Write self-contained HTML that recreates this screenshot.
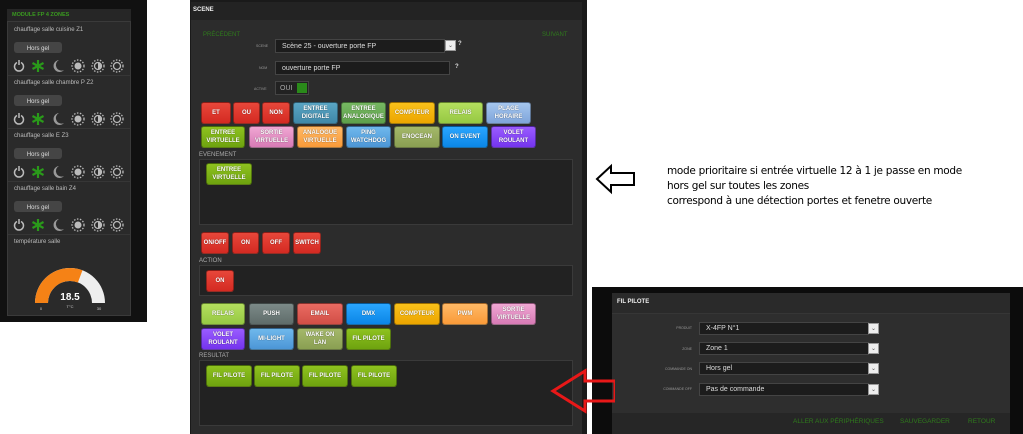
<!DOCTYPE html>
<html><head><meta charset="utf-8"><style>
*{margin:0;padding:0;box-sizing:border-box}
body{width:1023px;height:434px;background:#fff;position:relative;overflow:hidden;font-family:"Liberation Sans",Arial,sans-serif}
.a{position:absolute}
.t{font-size:6px;color:#bbb}
.b{position:absolute;height:22px;border-radius:3px;color:#fff;font-size:6px;font-weight:bold;display:flex;align-items:center;justify-content:center;text-align:center;line-height:8px;text-shadow:0 0 1px rgba(0,0,0,.6);border:1px solid rgba(0,0,0,.35)}
.red{background:linear-gradient(#e8473a,#d42a22)}
.tl{background:linear-gradient(#5aa5c4,#3f88a8)}
.gr{background:linear-gradient(#76b862,#5ea04b)}
.yl{background:linear-gradient(#f9c11a,#eca500)}
.lg{background:linear-gradient(#b4df5e,#96c843)}
.lb{background:linear-gradient(#a5c6ef,#7fa5da)}
.vg{background:linear-gradient(#8ec21f,#6ea30f)}
.pk{background:linear-gradient(#f0a7d3,#d77ab5)}
.or{background:linear-gradient(#ffb966,#f99a38)}
.bl{background:linear-gradient(#6fb8ec,#4c96d6)}
.ol{background:linear-gradient(#a4b86a,#8a9f52)}
.cy{background:linear-gradient(#2aa6ff,#0b86e6)}
.pu{background:linear-gradient(#9a5cff,#7434ee)}
.gy{background:linear-gradient(#7c8a88,#5f6c6a)}
.em{background:linear-gradient(#ea6b62,#d14e46)}
.box{position:absolute;background:#222;border:1px solid #3a3a3a}
.lbl{position:absolute;font-size:6px;color:#aaa}
.sel{position:absolute;background:#1c1c1c;border:1px solid #444;color:#ddd;font-size:7px;padding-left:6px;display:flex;align-items:center}
.arr{position:absolute;background:#eee;border:1px solid #999;width:11px;height:11px;font-size:6px;color:#555;text-align:center;line-height:10px}
.ico{position:absolute;top:61px;width:12px;height:12px}
</style></head><body>

<!-- Left panel -->
<div class="a" style="left:0;top:0;width:147px;height:322px;background:#111"></div>
<div class="a" style="left:7px;top:9px;width:124px;height:307px;background:#2a2a2a;border:1px solid #3a3a3a"></div>
<div class="a" style="left:7px;top:9px;width:124px;height:13px;background:#262626;border-bottom:1px solid #3a3a3a"></div>
<div class="a" style="left:12px;top:12px;font-size:5.5px;font-weight:bold;color:#3a9a20">MODULE FP 4 ZONES</div>

<div class="a t" style="left:14px;top:27px">chauffage salle cuisine Z1</div>
<div class="a t" style="left:14px;top:80px">chauffage salle chambre P Z2</div>
<div class="a t" style="left:14px;top:133px">chauffage salle E Z3</div>
<div class="a t" style="left:14px;top:186px">chauffage salle bain Z4</div>
<div class="a t" style="left:14px;top:239px">température salle</div>
<div class="a" style="left:8px;top:75px;width:122px;height:1px;background:#363636"></div>
<div class="a" style="left:8px;top:128px;width:122px;height:1px;background:#363636"></div>
<div class="a" style="left:8px;top:181px;width:122px;height:1px;background:#363636"></div>
<div class="a" style="left:8px;top:234px;width:122px;height:1px;background:#363636"></div>

<div id="zones"></div>
<svg class="a" style="left:0;top:0" width="147" height="322">
<g id="z">
</g>
<!-- zone 1..4 buttons and icons -->
<g font-family="Liberation Sans" font-size="6" fill="#ddd">
<rect x="14" y="42" width="48" height="11" rx="3" fill="#454545"/><text x="38" y="50" text-anchor="middle">Hors gel</text>
<rect x="14" y="95" width="48" height="11" rx="3" fill="#454545"/><text x="38" y="103" text-anchor="middle">Hors gel</text>
<rect x="14" y="148" width="48" height="11" rx="3" fill="#454545"/><text x="38" y="156" text-anchor="middle">Hors gel</text>
<rect x="14" y="201" width="48" height="11" rx="3" fill="#454545"/><text x="38" y="209" text-anchor="middle">Hors gel</text>
</g>
<defs>
<g id="row">
<path d="M17 62.5 A4.5 4.5 0 1 0 21 62.5" fill="none" stroke="#bbb" stroke-width="1.5"/>
<line x1="19" y1="60" x2="19" y2="65" stroke="#bbb" stroke-width="1.5"/>
<g stroke="#2a9a1a" stroke-width="2.2"><line x1="38" y1="60" x2="38" y2="72"/><line x1="32.5" y1="63" x2="43.5" y2="69"/><line x1="32.5" y1="69" x2="43.5" y2="63"/></g>
<path d="M59 60 A6 6 0 1 0 64 70 A5 5 0 0 1 59 60Z" fill="#999"/>
<circle cx="78" cy="66" r="3.5" fill="#bbb"/>
<g stroke="#bbb" stroke-width="1.3" stroke-dasharray="1.5 1.5"><circle cx="78" cy="66" r="6" fill="none"/></g>
<circle cx="98" cy="66" r="3.5" fill="none" stroke="#bbb" stroke-width="1.3"/><path d="M98 62.5 A3.5 3.5 0 0 1 98 69.5Z" fill="#bbb"/>
<circle cx="98" cy="66" r="6" fill="none" stroke="#bbb" stroke-width="1.3" stroke-dasharray="1.5 1.5"/>
<circle cx="117" cy="66" r="3.5" fill="none" stroke="#bbb" stroke-width="1.3"/>
<circle cx="117" cy="66" r="6" fill="none" stroke="#bbb" stroke-width="1.3" stroke-dasharray="1.5 1.5"/>
</g>
</defs>
<use href="#row"/>
<use href="#row" y="53"/>
<use href="#row" y="106"/>
<use href="#row" y="159"/>
<!-- gauge -->
<path d="M35 303 A35 35 0 0 1 105 303 L92 303 A22 22 0 0 0 48 303Z" fill="#eee"/>
<path d="M35 303 A35 35 0 0 1 82.5 270.3 L77.9 282.5 A22 22 0 0 0 48 303Z" fill="#f58216"/>
<text x="70" y="300" text-anchor="middle" font-family="Liberation Sans" font-weight="bold" font-size="10" fill="#fff">18.5</text>
<text x="70" y="308" text-anchor="middle" font-family="Liberation Sans" font-size="4" fill="#ccc">T°C</text>
<text x="41" y="310" text-anchor="middle" font-family="Liberation Sans" font-size="4" fill="#ccc">0</text>
<text x="99" y="310" text-anchor="middle" font-family="Liberation Sans" font-size="4" fill="#ccc">30</text>
</svg>

<!-- Main panel -->
<div class="a" style="left:190px;top:0;width:397px;height:434px;background:#1a1a1a"></div>
<div class="a" style="left:191px;top:2px;width:391px;height:432px;background:#2c2c2c"></div>
<div class="a" style="left:191px;top:2px;width:391px;height:18px;background:#232323"></div>
<div class="a" style="left:193px;top:7px;font-size:6px;font-weight:bold;color:#eee">SCENE</div>
<div class="a" style="left:203px;top:32px;font-size:6px;color:#2f7a1c">PRÉCÉDENT</div>
<div class="a" style="left:542px;top:32px;font-size:6px;color:#2f7a1c">SUIVANT</div>
<div class="a" style="left:256px;top:44px;font-size:3.5px;color:#999">SCENE</div>
<div class="sel" style="left:275px;top:39px;width:170px;height:14px">Scène 25 - ouverture porte FP</div>
<div class="arr" style="left:445px;top:40px">&#8964;</div>
<div class="a" style="left:458px;top:41px;font-size:6px;color:#ddd;font-weight:bold">?</div>
<div class="a" style="left:259px;top:66px;font-size:3.5px;color:#999">NOM</div>
<div class="sel" style="left:275px;top:61px;width:175px;height:14px">ouverture porte FP</div>
<div class="a" style="left:455px;top:64px;font-size:6px;color:#ddd;font-weight:bold">?</div>
<div class="a" style="left:254px;top:87px;font-size:3.5px;color:#999">ACTIVE</div>
<div class="a" style="left:275px;top:81px;width:34px;height:14px;background:#222;border:1px solid #444;font-size:7px;color:#aaa;padding:3px 0 0 4px">OUI</div>
<div class="a" style="left:297px;top:83px;width:10px;height:10px;background:#2a8a1a"></div>

<div class="b red" style="left:201px;top:102px;width:30px">ET</div>
<div class="b red" style="left:233px;top:102px;width:27px">OU</div>
<div class="b red" style="left:262px;top:102px;width:28px">NON</div>
<div class="b tl" style="left:293px;top:102px;width:45px">ENTREE<br>DIGITALE</div>
<div class="b gr" style="left:341px;top:102px;width:45px">ENTREE<br>ANALOGIQUE</div>
<div class="b yl" style="left:389px;top:102px;width:46px">COMPTEUR</div>
<div class="b lg" style="left:438px;top:102px;width:45px">RELAIS</div>
<div class="b lb" style="left:486px;top:102px;width:45px">PLAGE<br>HORAIRE</div>
<div class="b vg" style="left:201px;top:126px;width:44px">ENTREE<br>VIRTUELLE</div>
<div class="b pk" style="left:249px;top:126px;width:45px">SORTIE<br>VIRTUELLE</div>
<div class="b or" style="left:297px;top:126px;width:46px">ANALOGUE<br>VIRTUELLE</div>
<div class="b bl" style="left:346px;top:126px;width:45px">PING<br>WATCHDOG</div>
<div class="b ol" style="left:394px;top:126px;width:46px">ENOCEAN</div>
<div class="b cy" style="left:442px;top:126px;width:46px">ON EVENT</div>
<div class="b pu" style="left:491px;top:126px;width:45px">VOLET<br>ROULANT</div>

<div class="lbl" style="left:199px;top:152px">EVENEMENT</div>
<div class="box" style="left:199px;top:159px;width:374px;height:66px"></div>
<div class="b vg" style="left:206px;top:163px;width:46px">ENTREE<br>VIRTUELLE</div>

<div class="b red" style="left:201px;top:232px;width:28px">ON/OFF</div>
<div class="b red" style="left:232px;top:232px;width:27px">ON</div>
<div class="b red" style="left:262px;top:232px;width:28px">OFF</div>
<div class="b red" style="left:293px;top:232px;width:28px">SWITCH</div>
<div class="lbl" style="left:199px;top:258px">ACTION</div>
<div class="box" style="left:199px;top:265px;width:374px;height:31px"></div>
<div class="b red" style="left:206px;top:270px;width:28px">ON</div>

<div class="b lg" style="left:201px;top:303px;width:44px">RELAIS</div>
<div class="b gy" style="left:249px;top:303px;width:45px">PUSH</div>
<div class="b em" style="left:297px;top:303px;width:46px">EMAIL</div>
<div class="b cy" style="left:346px;top:303px;width:45px">DMX</div>
<div class="b yl" style="left:394px;top:303px;width:46px">COMPTEUR</div>
<div class="b or" style="left:442px;top:303px;width:46px">PWM</div>
<div class="b pk" style="left:491px;top:303px;width:45px">SORTIE<br>VIRTUELLE</div>
<div class="b pu" style="left:201px;top:328px;width:44px">VOLET<br>ROULANT</div>
<div class="b bl" style="left:249px;top:328px;width:45px">MI-LIGHT</div>
<div class="b ol" style="left:297px;top:328px;width:46px">WAKE ON<br>LAN</div>
<div class="b vg" style="left:346px;top:328px;width:45px">FIL PILOTE</div>
<div class="lbl" style="left:199px;top:353px">RESULTAT</div>
<div class="box" style="left:199px;top:360px;width:374px;height:66px"></div>
<div class="b vg" style="left:206px;top:365px;width:46px">FIL PILOTE</div>
<div class="b vg" style="left:254px;top:365px;width:46px">FIL PILOTE</div>
<div class="b vg" style="left:302px;top:365px;width:46px">FIL PILOTE</div>
<div class="b vg" style="left:351px;top:365px;width:46px">FIL PILOTE</div>

<!-- annotation -->
<svg class="a" style="left:590px;top:160px" width="60" height="40"><path d="M7 19 L21 6 L21 13 L44 13 L44 25 L21 25 L21 32 Z" fill="#fff" stroke="#000" stroke-width="2"/></svg>
<div class="a" style="left:667px;top:164px;font-family:'DejaVu Sans',sans-serif;font-size:10.5px;line-height:15px;color:#000;letter-spacing:-0.3px">mode prioritaire si entrée virtuelle 12 à 1 je passe en mode<br>hors gel sur toutes les zones<br>correspond à une détection portes et fenetre ouverte</div>

<!-- Fil pilote panel -->
<div class="a" style="left:592px;top:287px;width:431px;height:147px;background:#0c0c0c"></div>
<div class="a" style="left:612px;top:293px;width:398px;height:141px;background:#2e2e2e"></div>
<div class="a" style="left:612px;top:293px;width:398px;height:21px;background:#2a2a2a;border-bottom:1px solid #363636"></div>
<div class="a" style="left:617px;top:299px;font-size:6px;font-weight:bold;color:#eee">FIL PILOTE</div>
<div class="a" style="left:612px;top:413px;width:398px;height:21px;background:#262626"></div>
<div class="a" style="left:664px;top:326px;font-size:3.5px;color:#999;width:28px;text-align:right">PRODUIT</div>
<div class="a" style="left:650px;top:347px;font-size:3.5px;color:#999;width:42px;text-align:right">ZONE</div>
<div class="a" style="left:630px;top:367px;font-size:3.5px;color:#999;width:62px;text-align:right">COMMANDE ON</div>
<div class="a" style="left:630px;top:387px;font-size:3.5px;color:#999;width:62px;text-align:right">COMMANDE OFF</div>
<div class="sel" style="left:699px;top:322px;width:170px;height:13px">X-4FP N°1</div>
<div class="sel" style="left:699px;top:342px;width:170px;height:13px">Zone 1</div>
<div class="sel" style="left:699px;top:362px;width:170px;height:13px">Hors gel</div>
<div class="sel" style="left:699px;top:383px;width:170px;height:13px">Pas de commande</div>
<div class="arr" style="left:868px;top:323px">&#8964;</div>
<div class="arr" style="left:868px;top:343px">&#8964;</div>
<div class="arr" style="left:868px;top:363px">&#8964;</div>
<div class="arr" style="left:868px;top:384px">&#8964;</div>
<div class="a" style="left:793px;top:418px;font-size:6.5px;color:#2f7a1c">ALLER AUX PÉRIPHÉRIQUES</div>
<div class="a" style="left:900px;top:418px;font-size:6.5px;color:#2f7a1c">SAUVEGARDER</div>
<div class="a" style="left:968px;top:418px;font-size:6.5px;color:#2f7a1c">RETOUR</div>

<!-- red arrow -->
<svg class="a" style="left:545px;top:365px" width="70" height="52"><path d="M8 26 L40 6 L40 16 L70 16 L70 36 L40 36 L40 46 Z" fill="none" stroke="#e81818" stroke-width="3"/></svg>
</body></html>
